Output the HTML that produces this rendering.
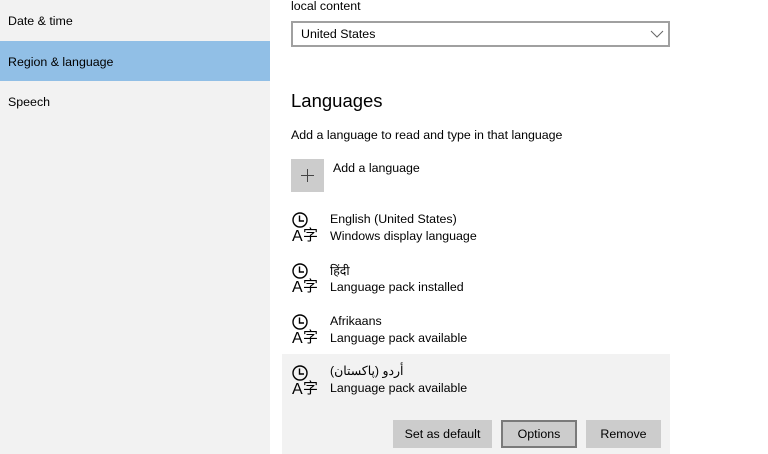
<!DOCTYPE html>
<html><head><meta charset="utf-8"><style>
*{margin:0;padding:0;box-sizing:border-box}
body{width:768px;height:454px;overflow:hidden;background:#fff;font-family:"Liberation Sans",sans-serif;font-size:12.4px;color:#000;position:relative}
.a{position:absolute;white-space:nowrap}
.left{position:absolute;left:0;top:0;width:270px;height:454px;background:#f2f2f2}
.sel{position:absolute;left:0;top:41px;width:270px;height:40px;background:#91bfe6}
.btn{position:absolute;top:420px;height:28px;background:#cccccc;text-align:center;line-height:28px;font-size:12.4px}
.ic{position:absolute;width:32px;height:32px}
</style></head><body>
<div class="left"></div>
<div class="sel"></div>
<div class="a" style="left:8px;top:14px">Date &amp; time</div>
<div class="a" style="left:8px;top:55px">Region &amp; language</div>
<div class="a" style="left:8px;top:95px">Speech</div>

<div class="a" style="left:291px;top:-1px">local content</div>
<div class="a" style="left:291px;top:21px;width:379px;height:26px;border:2px solid #a0a0a0"></div>
<div class="a" style="left:301px;top:27px">United States</div>
<svg class="a" style="left:650px;top:29px" width="14" height="10"><path d="M1 2 L7 8 L13 2" fill="none" stroke="#666" stroke-width="1"/></svg>

<div class="a" style="left:291px;top:90px;font-size:18.5px">Languages</div>
<div class="a" style="left:291px;top:128px">Add a language to read and type in that language</div>
<div class="a" style="left:291px;top:159px;width:33px;height:33px;background:#ccc"></div>
<svg class="a" style="left:300px;top:168px" width="15" height="15"><path d="M7.5 1V14M1 7.5H14" stroke="#444" stroke-width="1"/></svg>
<div class="a" style="left:333px;top:161px">Add a language</div>

<div class="a" style="left:282px;top:354px;width:388px;height:100px;background:#f2f2f2"></div>

<div class="a" style="left:330px;top:212px">English (United States)</div>
<div class="a" style="left:330px;top:229px">Windows display language</div>
<div class="a" style="left:330px;top:262px;font-family:'Liberation Sans','Noto Sans CJK SC',sans-serif">हिंदी</div>
<div class="a" style="left:330px;top:280px">Language pack installed</div>
<div class="a" style="left:330px;top:314px">Afrikaans</div>
<div class="a" style="left:330px;top:331px">Language pack available</div>
<div class="a" style="left:330px;top:363px" dir="rtl">أردو (پاکستان)</div>
<div class="a" style="left:330px;top:381px">Language pack available</div>

<svg width="0" height="0" style="position:absolute"><defs><g id="li"><circle cx="9" cy="9" r="7" fill="none" stroke="#000" stroke-width="1.4"/><path d="M8.5 4.5V10H13" fill="none" stroke="#000" stroke-width="1.4"/><text x="1" y="30" font-size="16" font-family="Liberation Sans,sans-serif">A</text><text x="12" y="29" font-size="15" font-family="Noto Sans CJK SC,sans-serif">字</text></g></defs></svg>
<svg class="ic" style="left:291px;top:211px"><use href="#li"/></svg>
<svg class="ic" style="left:291px;top:262px"><use href="#li"/></svg>
<svg class="ic" style="left:291px;top:313px"><use href="#li"/></svg>
<svg class="ic" style="left:291px;top:364px"><use href="#li"/></svg>

<div class="btn" style="left:393px;width:99px">Set as default</div>
<div class="btn" style="left:501px;width:76px;border:2px solid #7a7a7a;line-height:24px">Options</div>
<div class="btn" style="left:586px;width:75px">Remove</div>
</body></html>
